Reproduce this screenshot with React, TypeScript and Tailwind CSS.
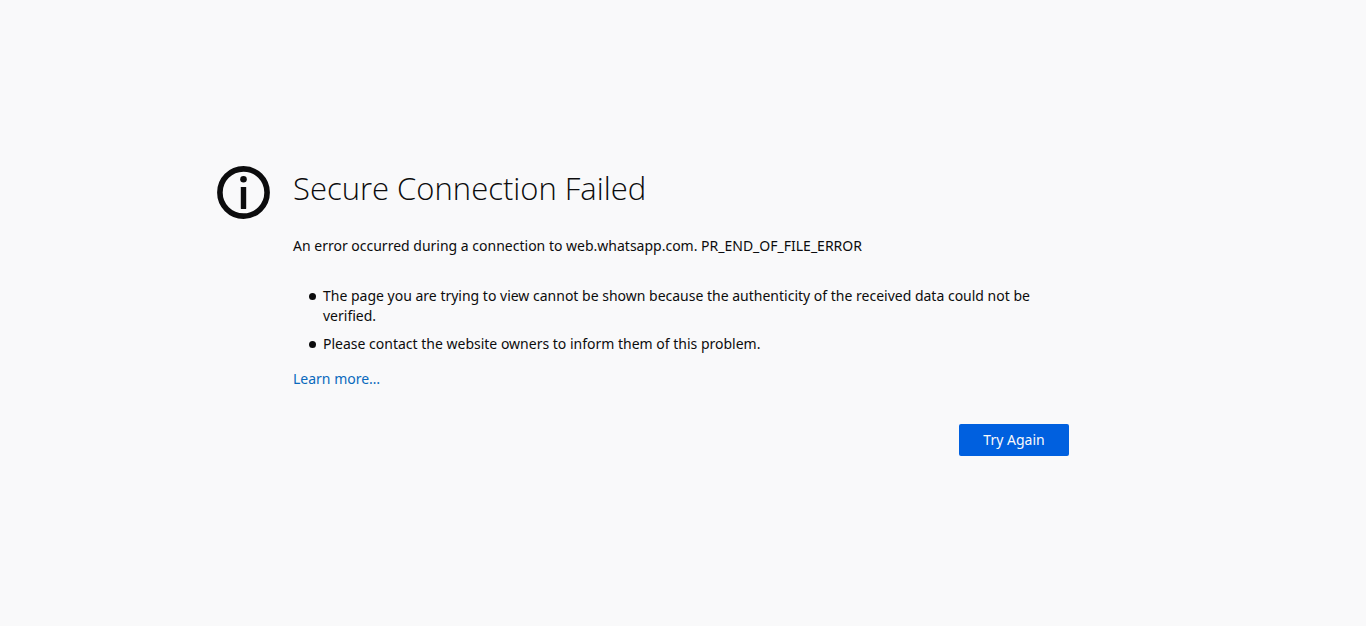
/**
 * Network error page
 * Shown when a secure connection could not be established
 */

import React from 'react';

const hints = [
  'The page you are trying to view cannot be shown because the authenticity of the received data could not be verified.',
  'Please contact the website owners to inform them of this problem.',
];

const InfoIcon: React.FC = () => (
  <svg viewBox="0 0 53 53" className="mt-0.5 size-[53px] shrink-0" aria-hidden="true">
    <circle cx="26.5" cy="26.5" r="23.6" fill="none" stroke="#0c0c0d" strokeWidth="5.6" />
    <circle cx="26.5" cy="13.2" r="3.3" fill="#0c0c0d" />
    <rect x="23.8" y="21" width="5.4" height="22" rx="0.4" fill="#0c0c0d" />
  </svg>
);

const App: React.FC = () => {
  return (
    <main className="flex min-h-screen items-center justify-center bg-[#f9f9fa] font-['Noto_Sans','Open_Sans',sans-serif] text-sm leading-5 text-[#0c0c0d]">
      <div className="flex w-full max-w-[932px] gap-[23px] pr-20 pb-1.5">
        <InfoIcon />

        <div className="min-w-0 flex-1">
          <h1 className="font-['Open_Sans','Noto_Sans',sans-serif] text-[31px] leading-12 font-light">
            Secure Connection Failed
          </h1>

          <p className="mt-6">
            An error occurred during a connection to web.whatsapp.com. PR_END_OF_FILE_ERROR
          </p>

          <ul className="mt-[30px] space-y-2 pr-4 pl-4">
            {hints.map((hint) => (
              <li
                key={hint}
                className="flex gap-[7px] before:mt-[7px] before:size-[7px] before:shrink-0 before:rounded-full before:bg-[#0c0c0d]"
              >
                {hint}
              </li>
            ))}
          </ul>

          <p className="mt-[15px]">
            <a href="#learn-more" className="text-[#0a69bd] hover:underline">
              Learn more…
            </a>
          </p>

          <div className="mt-[35px] flex justify-end">
            <button
              type="button"
              className="h-8 w-[110px] rounded-xs bg-[#0060df] text-[#f9f9fa] hover:bg-[#003eaa]"
            >
              Try Again
            </button>
          </div>
        </div>
      </div>
    </main>
  );
};

export default App;
